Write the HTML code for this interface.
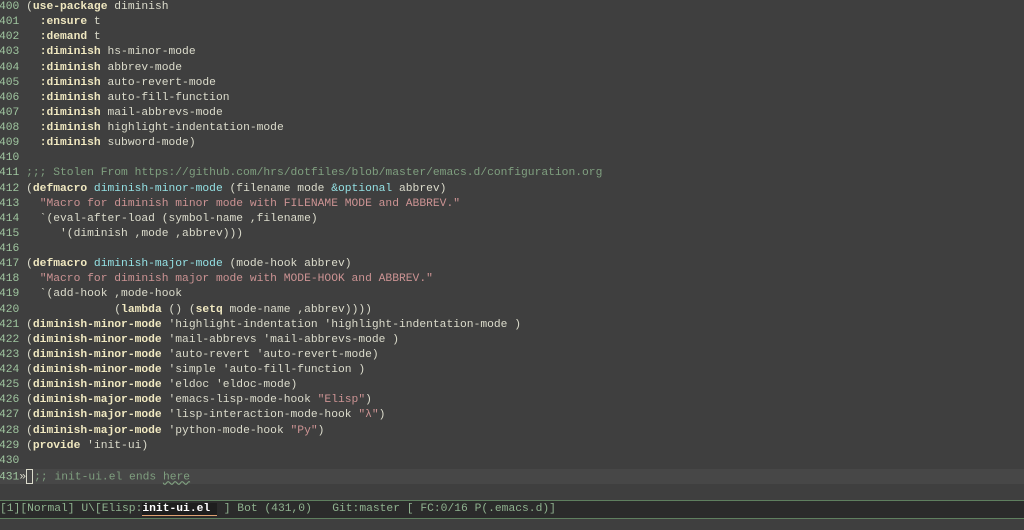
<!DOCTYPE html>
<html><head><meta charset="utf-8">
<style>
html,body{margin:0;padding:0;width:1024px;height:530px;overflow:hidden;background:#3f3f3f;}
body{font-family:"Liberation Mono",monospace;font-size:11.3px;color:#dcdccc;}
.code{position:absolute;left:-1px;top:0px;}
.l{height:15.13px;line-height:15.13px;white-space:pre;}
.n{color:#9fc59f;}
.k{color:#f0e8c0;font-weight:bold;}
.f{color:#93e0e3;}
.s{color:#cc9393;}
.c{color:#7f9f7f;}
.cur{background:#474747;width:1030px;}
.ml{position:absolute;left:0;top:500px;width:1024px;height:17px;background:#2b2b2b;border-top:1px solid #5f7f5f;border-bottom:1px solid #5f7f5f;line-height:17px;color:#8fb28f;white-space:pre;}
.bn{background:#1e1e1e;color:#fff;font-weight:bold;border-bottom:1px solid #e0a070;}
.box{display:inline-block;width:5px;height:13px;border:1px solid #dcdccc;vertical-align:middle;margin-right:1px;}
</style></head><body>
<div class="code">
<div class="l"><span class="n">400 </span>(<span class="k">use-package</span> diminish</div>
<div class="l"><span class="n">401 </span>  <span class="k">:ensure</span> t</div>
<div class="l"><span class="n">402 </span>  <span class="k">:demand</span> t</div>
<div class="l"><span class="n">403 </span>  <span class="k">:diminish</span> hs-minor-mode</div>
<div class="l"><span class="n">404 </span>  <span class="k">:diminish</span> abbrev-mode</div>
<div class="l"><span class="n">405 </span>  <span class="k">:diminish</span> auto-revert-mode</div>
<div class="l"><span class="n">406 </span>  <span class="k">:diminish</span> auto-fill-function</div>
<div class="l"><span class="n">407 </span>  <span class="k">:diminish</span> mail-abbrevs-mode</div>
<div class="l"><span class="n">408 </span>  <span class="k">:diminish</span> highlight-indentation-mode</div>
<div class="l"><span class="n">409 </span>  <span class="k">:diminish</span> subword-mode)</div>
<div class="l"><span class="n">410 </span></div>
<div class="l"><span class="n">411 </span><span class="c">;;; Stolen From https://github.com/hrs/dotfiles/blob/master/emacs.d/configuration.org</span></div>
<div class="l"><span class="n">412 </span>(<span class="k">defmacro</span> <span class="f">diminish-minor-mode</span> (filename mode <span class="f">&amp;optional</span> abbrev)</div>
<div class="l"><span class="n">413 </span>  <span class="s">"Macro for diminish minor mode with FILENAME MODE and ABBREV."</span></div>
<div class="l"><span class="n">414 </span>  `(eval-after-load (symbol-name ,filename)</div>
<div class="l"><span class="n">415 </span>     '(diminish ,mode ,abbrev)))</div>
<div class="l"><span class="n">416 </span></div>
<div class="l"><span class="n">417 </span>(<span class="k">defmacro</span> <span class="f">diminish-major-mode</span> (mode-hook abbrev)</div>
<div class="l"><span class="n">418 </span>  <span class="s">"Macro for diminish major mode with MODE-HOOK and ABBREV."</span></div>
<div class="l"><span class="n">419 </span>  `(add-hook ,mode-hook</div>
<div class="l"><span class="n">420 </span>             (<span class="k">lambda</span> () (<span class="k">setq</span> mode-name ,abbrev))))</div>
<div class="l"><span class="n">421 </span>(<span class="k">diminish-minor-mode</span> 'highlight-indentation 'highlight-indentation-mode )</div>
<div class="l"><span class="n">422 </span>(<span class="k">diminish-minor-mode</span> 'mail-abbrevs 'mail-abbrevs-mode )</div>
<div class="l"><span class="n">423 </span>(<span class="k">diminish-minor-mode</span> 'auto-revert 'auto-revert-mode)</div>
<div class="l"><span class="n">424 </span>(<span class="k">diminish-minor-mode</span> 'simple 'auto-fill-function )</div>
<div class="l"><span class="n">425 </span>(<span class="k">diminish-minor-mode</span> 'eldoc 'eldoc-mode)</div>
<div class="l"><span class="n">426 </span>(<span class="k">diminish-major-mode</span> 'emacs-lisp-mode-hook <span class="s">"Elisp"</span>)</div>
<div class="l"><span class="n">427 </span>(<span class="k">diminish-major-mode</span> 'lisp-interaction-mode-hook <span class="s">"λ"</span>)</div>
<div class="l"><span class="n">428 </span>(<span class="k">diminish-major-mode</span> 'python-mode-hook <span class="s">"Py"</span>)</div>
<div class="l"><span class="n">429 </span>(<span class="k">provide</span> 'init-ui)</div>
<div class="l"><span class="n">430 </span></div>
<div class="l cur"><span class="n">431</span>»<span class="box"></span><span class="c">;; init-ui.el ends <u style="text-decoration-style:wavy">here</u></span></div>
</div>
<div class="ml">[1][Normal] U\[Elisp:<span class="bn">init-ui.el </span> ] Bot (431,0)   Git:master [ FC:0/16 P(.emacs.d)]</div>
</body></html>
